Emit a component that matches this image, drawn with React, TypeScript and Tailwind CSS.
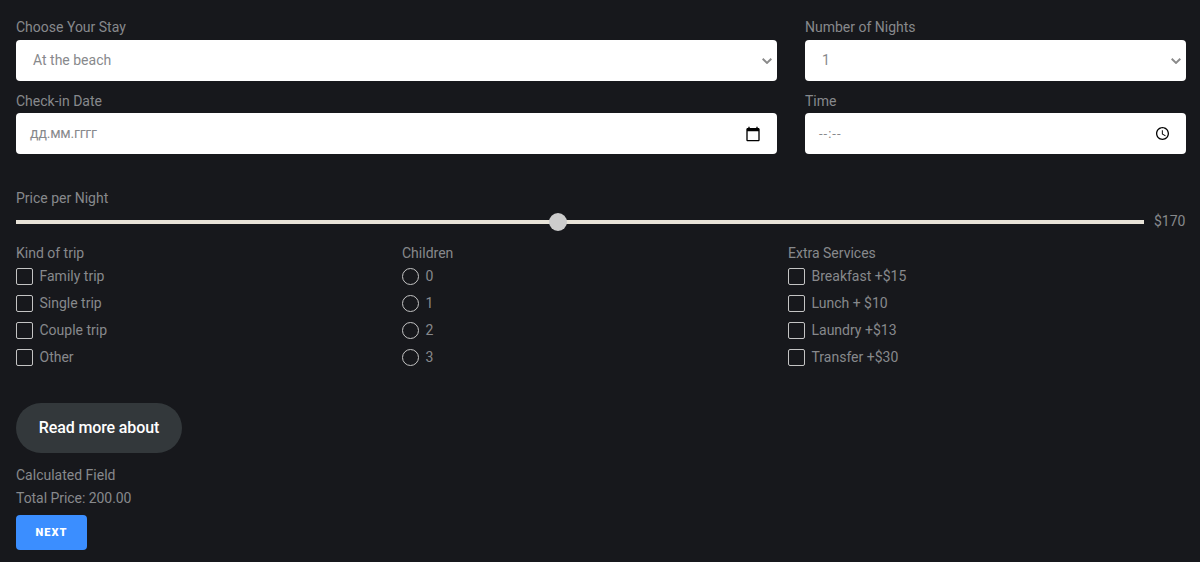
const tripKinds = ["Family trip", "Single trip", "Couple trip", "Other"];
const childCounts = ["0", "1", "2", "3"];
const extras = ["Breakfast +$15", "Lunch + $10", "Laundry +$13", "Transfer +$30"];

const labelClass = "block h-[22px] text-[14px] leading-[22px] text-[#87898c]";

const SelectField = ({ value }: { value: string }) => (
  <div className="flex h-[41px] items-center justify-between rounded-[4px] bg-white pl-[17px] pr-[5px] text-[14px] text-[#87898c]">
    <span className="-translate-y-[0.5px]">{value}</span>
    <svg width="10" height="6" viewBox="0 0 10 6" fill="none" stroke="#8a8a8a" strokeWidth="1.9">
      <path d="M0.7 0.8 5 5 9.3 0.8" />
    </svg>
  </div>
);

const CheckGroup = ({ title, items, radio }: { title: string; items: string[]; radio?: boolean }) => (
  <div className="w-[386px] shrink-0">
    <div className="h-[21px] text-[14px] leading-[22px] text-[#87898c]">{title}</div>
    <ul className="flex flex-col">
      {items.map((item) => (
        <li key={item} className="flex h-[27px] items-center gap-[6.5px] text-[14px] text-[#87898c]">
          <input
            type={radio ? "radio" : "checkbox"}
            name={radio ? title : undefined}
            className={
              radio
                ? "h-[17px] w-[17px] appearance-none rounded-full border border-[#c4c4c4]"
                : "h-[17px] w-[17px] appearance-none rounded-[2px] border border-[#c4c4c4]"
            }
          />
          <span>{item}</span>
        </li>
      ))}
    </ul>
  </div>
);

const App = () => {
  return (
    <div className="h-[562px] overflow-hidden bg-[#17181c] pl-[16px] pr-[14px] pt-[16px] font-['Roboto',sans-serif]">
      <div className="flex gap-[28px]">
        <div className="w-[761px] shrink-0">
          <label className={labelClass}>Choose Your Stay</label>
          <div className="pt-[2px]">
            <SelectField value="At the beach" />
          </div>
          <label className={`${labelClass} mt-[9px]`}>Check-in Date</label>
          <div className="pt-[1px]">
            <div className="flex h-[41px] items-center justify-between rounded-[4px] bg-white pl-[14px] pr-[16.5px]">
              <span className="text-[14px] tracking-[-0.2px] text-[#87898c]">дд.мм.гггг</span>
              <svg width="16" height="16" viewBox="0 0 24 24" fill="#000">
                <path d="M20 3h-1V1h-2v2H7V1H5v2H4c-1.1 0-2 .9-2 2v16c0 1.1.9 2 2 2h16c1.1 0 2-.9 2-2V5c0-1.1-.9-2-2-2zm0 18H4V8h16v13z" />
              </svg>
            </div>
          </div>
        </div>
        <div className="w-[381px] shrink-0">
          <label className={labelClass}>Number of Nights</label>
          <div className="pt-[2px]">
            <SelectField value="1" />
          </div>
          <label className={`${labelClass} mt-[9px]`}>Time</label>
          <div className="pt-[1px]">
            <div className="flex h-[41px] items-center justify-between rounded-[4px] bg-white pl-[14px] pr-[17.5px]">
              <span className="text-[13px] tracking-[1px] text-[#87898c]">--:--</span>
              <svg width="13" height="13" viewBox="2 2 20 20" fill="#000">
                <path d="M11.99 2C6.47 2 2 6.48 2 12s4.47 10 9.99 10C17.52 22 22 17.52 22 12S17.52 2 11.99 2zM12 20c-4.42 0-8-3.58-8-8s3.58-8 8-8 8 3.58 8 8-3.58 8-8 8zm.5-13H11v6l5.25 3.15.75-1.23-4.5-2.67z" />
              </svg>
            </div>
          </div>
        </div>
      </div>

      <div className="mt-[33px]">
        <label className={labelClass}>Price per Night</label>
        <div className="mt-[3px] flex h-[18px] items-center gap-[10px]">
          <input
            type="range"
            min={50}
            max={300}
            defaultValue={170}
            className="mt-[2px] h-[18px] w-[1128px] shrink-0 appearance-none bg-transparent [&::-webkit-slider-runnable-track]:h-[4px] [&::-webkit-slider-runnable-track]:bg-[#e8e3d8] [&::-webkit-slider-thumb]:mt-[-7px] [&::-webkit-slider-thumb]:h-[18px] [&::-webkit-slider-thumb]:w-[18px] [&::-webkit-slider-thumb]:appearance-none [&::-webkit-slider-thumb]:rounded-full [&::-webkit-slider-thumb]:bg-[#cccccc]"
          />
          <span className="text-[14px] text-[#87898c]">$170</span>
        </div>
      </div>

      <div className="mt-[12px] flex">
        <CheckGroup title="Kind of trip" items={tripKinds} />
        <CheckGroup title="Children" items={childCounts} radio />
        <CheckGroup title="Extra Services" items={extras} />
      </div>

      <button className="mt-[32px] block h-[50px] w-[166px] rounded-full bg-[#33383b] text-[16px] font-medium tracking-[-0.13px] text-white">
        Read more about
      </button>
      <div className="mt-[11px] h-[22px] text-[14px] leading-[22px] text-[#87898c]">Calculated Field</div>
      <div className="mt-[1px] h-[22px] text-[14px] leading-[22px] tracking-[-0.05px] text-[#87898c]">Total Price: 200.00</div>
      <button className="mt-[6px] block h-[35px] w-[71px] rounded-[4px] bg-[#3b8eff] pt-[1px] text-[11px] font-black tracking-[1px] text-white">
        NEXT
      </button>
    </div>
  );
};

export default App;
